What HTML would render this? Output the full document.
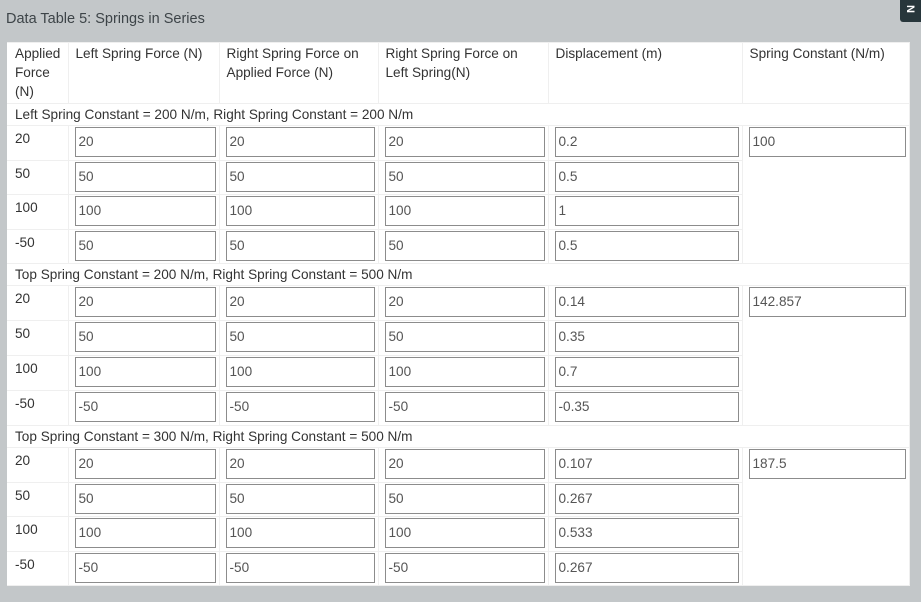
<!DOCTYPE html>
<html><head><meta charset="utf-8"><style>
*{box-sizing:border-box;margin:0;padding:0}
body{width:921px;height:602px;background:#c3c7c9;font-family:"Liberation Sans",Arial,sans-serif;font-size:13.6px;color:#333;position:relative;overflow:hidden}
.title{position:absolute;left:6px;top:11px;font-size:14.5px;color:#3d4448}
.tab{position:absolute;left:900px;top:0;width:21px;height:22px;background:#27363b;border-bottom-left-radius:3px;color:#fff;font-weight:bold;font-size:11px}
.tab span{position:absolute;left:6px;top:3px;transform:rotate(90deg)}
table{position:absolute;left:7px;top:42px;width:902px;border-collapse:collapse;table-layout:fixed;background:#fff}
td{border:1px solid #efefef;vertical-align:top;padding:0;line-height:19px}
tr.h td{height:61px;padding:1px 7px 0 7px}
tr.h td:first-child{padding-left:8px}
tr.l td{height:22px;padding:1px 8px 0}
tr.d td{height:34.5px}
tr.d.t td{height:35px}
tr.d td.a{padding:3px 8px 0}
tr.d td.i{padding:1px 3px 0 6px}
.in{height:30px;border:1px solid #8c8c8c;color:#555;padding-left:3px;line-height:28px}
table tr td:first-child{border-left:none}
</style></head><body>
<div class="title">Data Table 5: Springs in Series</div>
<div class="tab"><span>N</span></div>
<table>
<colgroup><col style="width:61px"><col style="width:151px"><col style="width:159px"><col style="width:170px"><col style="width:194px"><col style="width:167px"></colgroup>
<tr class="h"><td>Applied Force (N)</td><td>Left Spring Force (N)</td><td>Right Spring Force on Applied Force (N)</td><td>Right Spring Force on Left Spring(N)</td><td>Displacement (m)</td><td>Spring Constant (N/m)</td></tr>
<tr class="l"><td colspan="6">Left Spring Constant = 200 N/m, Right Spring Constant = 200 N/m</td></tr>
<tr class="d"><td class="a">20</td><td class="i"><div class="in">20</div></td><td class="i"><div class="in">20</div></td><td class="i"><div class="in">20</div></td><td class="i"><div class="in">0.2</div></td><td class="i" rowspan="4"><div class="in">100</div></td></tr>
<tr class="d"><td class="a">50</td><td class="i"><div class="in">50</div></td><td class="i"><div class="in">50</div></td><td class="i"><div class="in">50</div></td><td class="i"><div class="in">0.5</div></td></tr>
<tr class="d"><td class="a">100</td><td class="i"><div class="in">100</div></td><td class="i"><div class="in">100</div></td><td class="i"><div class="in">100</div></td><td class="i"><div class="in">1</div></td></tr>
<tr class="d"><td class="a">-50</td><td class="i"><div class="in">50</div></td><td class="i"><div class="in">50</div></td><td class="i"><div class="in">50</div></td><td class="i"><div class="in">0.5</div></td></tr>
<tr class="l"><td colspan="6">Top Spring Constant = 200 N/m, Right Spring Constant = 500 N/m</td></tr>
<tr class="d t"><td class="a">20</td><td class="i"><div class="in">20</div></td><td class="i"><div class="in">20</div></td><td class="i"><div class="in">20</div></td><td class="i"><div class="in">0.14</div></td><td class="i" rowspan="4"><div class="in">142.857</div></td></tr>
<tr class="d t"><td class="a">50</td><td class="i"><div class="in">50</div></td><td class="i"><div class="in">50</div></td><td class="i"><div class="in">50</div></td><td class="i"><div class="in">0.35</div></td></tr>
<tr class="d t"><td class="a">100</td><td class="i"><div class="in">100</div></td><td class="i"><div class="in">100</div></td><td class="i"><div class="in">100</div></td><td class="i"><div class="in">0.7</div></td></tr>
<tr class="d t"><td class="a">-50</td><td class="i"><div class="in">-50</div></td><td class="i"><div class="in">-50</div></td><td class="i"><div class="in">-50</div></td><td class="i"><div class="in">-0.35</div></td></tr>
<tr class="l"><td colspan="6">Top Spring Constant = 300 N/m, Right Spring Constant = 500 N/m</td></tr>
<tr class="d"><td class="a">20</td><td class="i"><div class="in">20</div></td><td class="i"><div class="in">20</div></td><td class="i"><div class="in">20</div></td><td class="i"><div class="in">0.107</div></td><td class="i" rowspan="4"><div class="in">187.5</div></td></tr>
<tr class="d"><td class="a">50</td><td class="i"><div class="in">50</div></td><td class="i"><div class="in">50</div></td><td class="i"><div class="in">50</div></td><td class="i"><div class="in">0.267</div></td></tr>
<tr class="d"><td class="a">100</td><td class="i"><div class="in">100</div></td><td class="i"><div class="in">100</div></td><td class="i"><div class="in">100</div></td><td class="i"><div class="in">0.533</div></td></tr>
<tr class="d"><td class="a">-50</td><td class="i"><div class="in">-50</div></td><td class="i"><div class="in">-50</div></td><td class="i"><div class="in">-50</div></td><td class="i"><div class="in">0.267</div></td></tr>
</table>
</body></html>
